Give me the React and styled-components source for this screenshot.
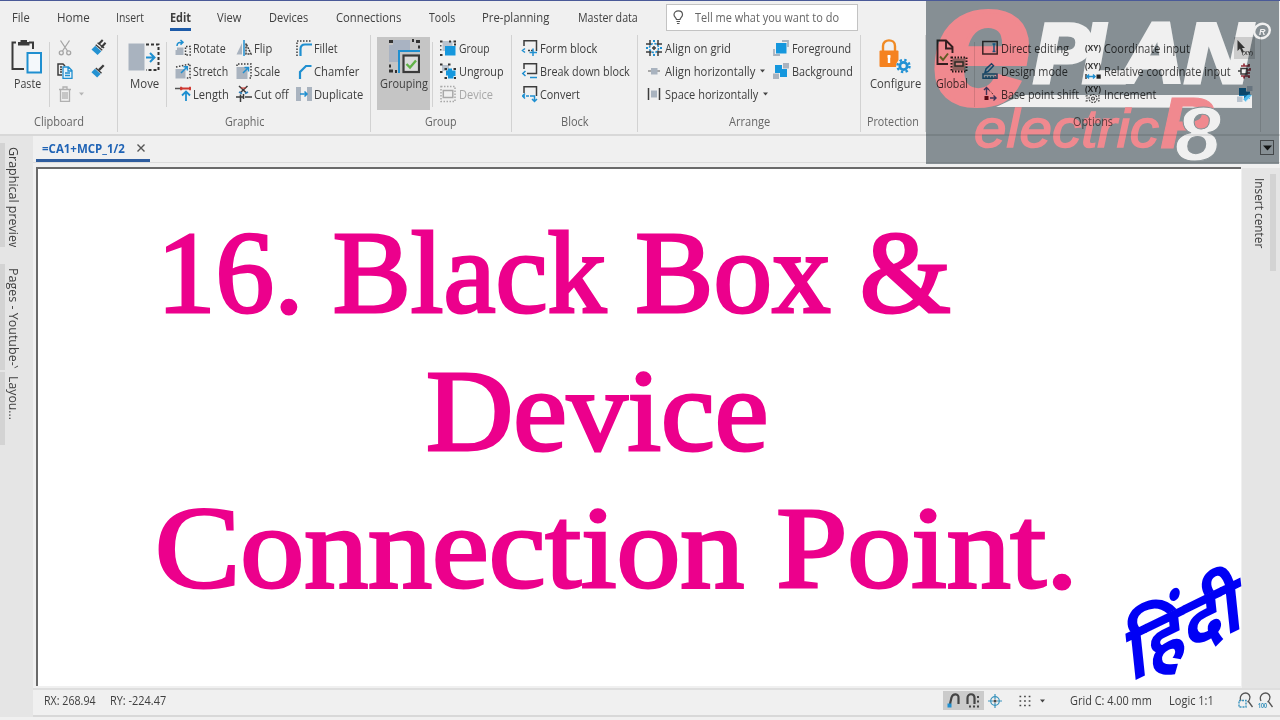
import React, {useLayoutEffect, useRef, useState} from "react";
import styled, {createGlobalStyle, css} from "styled-components";

const GlobalStyle = createGlobalStyle`
  * {
    box-sizing: border-box;
  }
  body {
    margin: 0;
    overflow: hidden;
    background: #f0f0f0;
    font-family: "Open Sans", "Noto Sans", sans-serif;
    font-size: 13px;
    color: #3f3f3f;
  }
`;

// Squeezes a text so that it takes exactly the given length.
function Fit({w, vertical, children}) {
  const ref = useRef();
  const [scale, setScale] = useState(1);

  useLayoutEffect(() => {
    const size = vertical ? ref.current.offsetHeight : ref.current.offsetWidth;
    setScale(w / size);
  }, [w, vertical]);

  return (
    <FitBox $w={w} $vertical={vertical}>
      <FitText
        ref={ref}
        $vertical={vertical}
        style={{transform: vertical ? `scaleY(${scale})` : `scaleX(${scale})`}}
      >
        {children}
      </FitText>
    </FitBox>
  );
}

const ink = {fill: "none", stroke: "#3c3c3c", strokeWidth: 1.5};
const blue = {fill: "none", stroke: "#1f8fd0", strokeWidth: 1.5};
const grey = "#a9b3bf";

const icons = {
  cut: (
    <g fill="none" stroke="#a5a5a5" strokeWidth="1.3">
      <path d="M3.500 0.500 L10.500 11 M12.500 0.500 L5.500 11" />
      <circle cx="4.3" cy="12.8" r="2" />
      <circle cx="11.7" cy="12.8" r="2" />
    </g>
  ),
  copy: (
    <>
      <path d="M5 12 H1 V1 H6 L8 3 M3 4 H5 M3 6.500 H5 M3 9 H5" {...ink} />
      <path d="M6 4 H11.500 L15 7.500 V15.300 H6 Z M11 4 V8 H15 M8 10 H13 M8 12.500 H13" fill="#e8f3fa" stroke="#1f8fd0" strokeWidth="1.3" />
    </>
  ),
  trash: (
    <path d="M2 3.500 H14 M6 3 V1 H10 V3 M3.500 4 V15.300 H12.500 V4 M6 6 V13 M8 6 V13 M10 6 V13" fill="none" stroke="#b0b0b0" strokeWidth="1.3" />
  ),
  brush: (
    <>
      <path d="M14.500 1.500 L9 7" stroke="#3c3c3c" strokeWidth="2.600" />
      <path d="M5.500 4.500 L12 10.500" stroke="#3c3c3c" strokeWidth="1.600" />
      <path d="M4.500 5.500 L11 11.500 L7 15.500 L0.500 9.500 Z" fill="#2492d2" />
    </>
  ),
  brushes: (
    <>
      <path d="M12.500 0 L8 4.500 M15.500 3 L11 8" stroke="#3c3c3c" strokeWidth="2.200" />
      <path d="M5 5 L12 11 M7 3 L14 8.500" stroke="#3c3c3c" strokeWidth="1.500" />
      <path d="M4.500 6 L11 12 L7 16 L0.500 10 Z" fill="#2492d2" />
    </>
  ),
  rotate: (
    <>
      <path d="M0.500 15 V10 H2 V7.500 H8.500 V15 Z" fill={grey} />
      <path d="M2 6 C2 3 4 2.200 7 2.200 M5.500 0 L8 2.200 L5.500 4.600" {...blue} />
      <path d="M10.500 15 V6.500 H15.200 V15 Z" {...ink} strokeDasharray="1.500 1.500" />
    </>
  ),
  flip: (
    <>
      <path d="M6 3 V14.500 H0.500 Z" fill={grey} />
      <path d="M8 0 V16" {...blue} />
      <path d="M10 3.500 V14 H15 Z" {...ink} strokeDasharray="2 1" />
    </>
  ),
  fillet: (
    <>
      <path d="M1 16 V1 H16" {...ink} strokeDasharray="1.500 1.500" />
      <path d="M4.500 16 V9 C4.500 6 6 4.500 9 4.500 H16" {...blue} strokeWidth="2.200" />
    </>
  ),
  stretch: (
    <>
      <rect x="0.500" y="6" width="10" height="9.500" fill={grey} />
      <path d="M1 4 L15 1 V15 H11" {...ink} strokeDasharray="1.500 1.500" />
      <path d="M6 10 L12 4 M8.500 3.700 H12.300 V7.500" {...blue} />
    </>
  ),
  scale: (
    <>
      <rect x="0.500" y="4" width="11" height="12" fill={grey} />
      <path d="M1 3 V1 H15 V15 H12" {...ink} strokeDasharray="1.500 1.500" />
      <path d="M7 10 L12 5 M8.500 4.500 H12.500 V8.500" {...blue} />
    </>
  ),
  chamfer: <path d="M4 16 V9 L10 3 H15.500" {...blue} strokeWidth="2.200" />,
  length: (
    <>
      <path d="M0 2.500 H8" stroke="#555" strokeWidth="1.500" />
      <path d="M6 2.500 H16 M6 0.800 V4.200 M15 0.800 V4.200" stroke="#d0362f" strokeWidth="1.800" />
      <path d="M11 15 V6 M7 9.500 L11 5.500 L15 9.500" {...blue} strokeWidth="1.800" />
    </>
  ),
  cutoff: (
    <>
      <path d="M0 11 H7 M9 11 H16 M4.500 8.500 V16 M7.500 8 V13" {...ink} />
      <path d="M3 0 L10.500 7 M11.500 0 L4 7" {...ink} />
      <path d="M3 6 L6 7.500 M12 6 L9 7.500" stroke="#2f7fb8" strokeWidth="1.800" />
      <path d="M5 2 L10 2" stroke="#d0362f" strokeWidth="1" />
    </>
  ),
  duplicate: (
    <>
      <path d="M0 1 H5 V15 H0 Z M11 1 H16 V15 H11 Z" fill={grey} />
      <path d="M4 8 H11 M8.500 5.500 L11 8 L8.500 10.500" {...blue} />
    </>
  ),
  group: (
    <>
      <rect x="2.500" y="1" width="10" height="10" fill="#b9c3ce" />
      <rect x="5" y="6" width="10.500" height="9.500" fill="#1597dd" />
      <path d="M0 1.500 H2.500 M9 1.500 H11 M13.500 1.500 H16 M0 15 H2.500 M14 4.500 H16" stroke="#333" strokeWidth="2" />
      <path d="M0.800 5 V13" stroke="#333" strokeWidth="1.300" strokeDasharray="1.500 2.500" />
    </>
  ),
  ungroup: (
    <>
      <path d="M2 2 H9 V8 H2 Z" fill="#b9c3ce" />
      <path d="M6 7.500 H8 V5.500 H12 V7.500 H15.500 V13 H13.500 V15.500 H8 V12.500 H6 Z" fill="#1597dd" />
      <path d="M0 1.500 H2.500 M8 1.500 H10.500 M0 9 H2.500 M4.500 6 H7 M13.500 6 H16 M4.500 15 H7 M14 15 H16" stroke="#333" strokeWidth="2" />
    </>
  ),
  device: (
    <g fill="none" stroke="#a9a9a9" strokeWidth="1.500">
      <rect x="1" y="0.500" width="14" height="15" strokeDasharray="1.500 1.500" />
      <rect x="3.300" y="4.500" width="9.500" height="7" />
    </g>
  ),
  formblock: (
    <>
      <path d="M2 6 V0.800 H14.500 V11" {...ink} />
      <path d="M6 10.500 H12" {...ink} strokeDasharray="2 1" />
      <path d="M3 8.500 L0.500 10.500 L3 12.500 M7.500 12.500 H15 M11 8.500 V16" {...blue} />
    </>
  ),
  breakblock: (
    <>
      <path d="M2 6 V0.800 H14.500 V10.500 H5" {...ink} />
      <path d="M3.500 8 L0.800 10.500 L3.500 13 M8 14.500 H15" {...blue} />
    </>
  ),
  convert: (
    <>
      <path d="M2 7 V0.800 H14.500 V10" {...ink} />
      <path d="M0 10 H10 M3 7.500 L0.500 10 L3 12.500" {...blue} strokeDasharray="3 1" />
      <path d="M10 10 H12.500 V15 M10 13 L12.500 15.500 L15 13" {...blue} />
    </>
  ),
  grid: (
    <>
      <path d="M4 0 V16 M12 0 V16 M0 4 H16 M0 12 H16" {...ink} strokeDasharray="5.500 5" />
      <path d="M8 0 V2 M8 14 V16 M0 8 H2 M14 8 H16" {...blue} strokeWidth="2" />
      <circle cx="8" cy="8" r="4.500" {...blue} strokeDasharray="2 1.500" />
      <path d="M8 6 V10 M6 8 H10" {...ink} />
    </>
  ),
  alignh: (
    <>
      <path d="M2 8 H14" stroke="#777" strokeWidth="1.200" />
      <rect x="5" y="5" width="6.500" height="6.500" fill={grey} />
    </>
  ),
  spaceh: (
    <>
      <path d="M2.500 2 V14 M13.500 2 V14" {...ink} />
      <rect x="5" y="4.500" width="6" height="7" fill={grey} />
    </>
  ),
  foreground: (
    <>
      <path d="M9 1 H15 V7 M1 9 V15 H7" fill="none" stroke={grey} strokeWidth="1.800" />
      <rect x="3" y="3" width="10.500" height="10.500" fill="#1597dd" />
    </>
  ),
  background: (
    <>
      <path d="M2 2 H9 V6 H14 V14 H7 V10 H2 Z" fill="#1597dd" />
      <path d="M10 0 H16 V5.500 H10 Z M0 10.500 H6 V16 H0 Z" fill={grey} />
    </>
  ),
  direct: (
    <>
      <rect x="0.800" y="1.500" width="14.400" height="12.500" {...ink} />
      <path d="M10.500 4 H13.500 M12 4 V11.500 M10.500 11.500 H13.500" {...blue} />
    </>
  ),
  design: (
    <>
      <path d="M1 11 H15 V15.200 H1 Z M4 13 V15 M7 13 V15 M10 13 V15 M13 13 V15" fill="none" stroke="#256f9b" strokeWidth="1.500" />
      <path d="M3 9.500 L4 6 L9.500 0.800 L11.500 2.800 L6 8.500 Z" fill="none" stroke="#2474a8" strokeWidth="1.500" />
    </>
  ),
  base: (
    <>
      <path d="M4.500 9 V2 M2 4 L4.500 1.500 L7 4 M8 12 H14 M11.500 9.500 L14 12 L11.500 14.500" fill="none" stroke="#3c5c94" strokeWidth="1.400" />
      <rect x="2.500" y="10" width="4" height="4" fill="#5a1020" />
      <path d="M7 4.500 C9 5.500 10.500 7 11 9" {...ink} strokeWidth="1" strokeDasharray="1 1" />
    </>
  ),
  pointer: (
    <>
      <rect width="21" height="22" x="-3" y="-3" fill="#000" opacity="0.15" />
      <path d="M0.500 0 V11 L3 8.500 L5 13 L7 12 L5 8 H8 Z" fill="#333" />
      <text x="5" y="15" fontSize="6" fontWeight="bold" fill="#444" textLength="11" lengthAdjust="spacingAndGlyphs">(XY)</text>
    </>
  ),
  contact: (
    <>
      <path d="M4 5.500 H10 V11 H4 Z M1 8 H4" {...ink} />
      <path d="M4 3 H7 V0.500 M7 3 H12 V1 M10 7 H13 V5 M4 13 H12 V15 M7 13 V15.500 M10 10 H13" fill="none" stroke="#94303c" strokeWidth="1.700" />
    </>
  ),
  layers: (
    <>
      <path d="M2 2 H9 V5.500 H13 V13 H7 V10 H2 Z" fill="#1277ae" />
      <path d="M10 0 H15.500 V5 H10 Z M0 10.500 H5.500 V16 H0 Z" fill="#b9c3ce" />
      <path d="M7.500 14.500 L13.500 8.500" stroke="#4fbdf0" strokeWidth="3.500" />
      <path d="M9.500 15 L14.500 10" stroke="#e4f2fa" strokeWidth="1" />
    </>
  ),
};

function Icon({name, size = 16}) {
  return (
    <svg width={size} height={size} viewBox="0 0 16 16" overflow="visible">
      {icons[name]}
    </svg>
  );
}

// The "(XY)" family of icons shares its lettering.
function CoordIcon({kind}) {
  return (
    <svg width="16" height="16" viewBox="0 0 16 16" overflow="visible">
      <text x="0" y={kind === "plain" ? 11 : 6} fontSize="8.500" fontWeight="bold" fill="#333" textLength="16" lengthAdjust="spacingAndGlyphs">
        (XY)
      </text>
      {kind === "relative" && (
        <>
          <path d="M1 11 V16" {...ink} />
          <path d="M1 13.500 H10 M4 11.500 L2 13.500 L4 15.500 M8 11.500 L10 13.500 L8 15.500" {...blue} />
          <rect x="11.500" y="11.500" width="4.200" height="4.200" fill="#222" />
        </>
      )}
      {kind === "increment" && (
        <g fill="none" stroke="#444" strokeWidth="1.100">
          <path d="M2 9 V16 M14 9 V16 M0.500 10 H3 M13 10 H15.500 M0.500 15 H3 M13 15 H15.500" strokeDasharray="1.500 1" />
          <circle cx="8" cy="12.500" r="4" strokeDasharray="2 1" />
          <circle cx="8" cy="12.500" r="1.500" />
        </g>
      )}
    </svg>
  );
}

const PasteIcon = () => (
  <svg width="34" height="36" viewBox="1 0 34 36">
    <path d="M7 4.500 H3.500 V31 H15 M20 4.500 H24 V11" fill="none" stroke="#3a3a3a" strokeWidth="2" />
    <path d="M9 7.500 V4 H11.500 V2 H18 V4 H20.500 V7.500 Z" fill="#3a3a3a" />
    <rect x="18.500" y="15" width="13.500" height="19.500" fill="#f4f8fb" stroke="#1f8fd0" strokeWidth="2" />
  </svg>
);

const MoveIcon = () => (
  <svg width="32" height="36" viewBox="0 0 32 36">
    <rect x="0.500" y="5.500" width="16" height="27" fill="#a9b3bf" />
    <path d="M18 6.500 H30.500 V32 H18" fill="none" stroke="#333" strokeWidth="2" strokeDasharray="3 2" />
    <path d="M18 19.500 H26 M22 15 L26.500 19.500 L22 24" fill="none" stroke="#1f8fd0" strokeWidth="2" />
  </svg>
);

const GroupingIcon = () => (
  <svg width="32" height="36" viewBox="0 0 32 36">
    <path d="M5 2 H22 V12 H10 V24 H1 V7 H5 Z" fill="#a9b3c2" />
    <path d="M11 35 V13 H32" fill="none" stroke="#1f8fd0" strokeWidth="2" />
    <rect x="15.500" y="17.500" width="15.500" height="16.500" fill="#dcdcdc" stroke="#3a3a3a" strokeWidth="2.200" />
    <path d="M18.500 26 L22 29.500 L28 22.500" fill="none" stroke="#60b246" strokeWidth="2.400" />
    <path d="M1 3.500 H5 M24 2.500 H26 M28 3.500 H32 M1 33 H5 M7 33.500 H9 M30 9 H32 M1 28 H3" stroke="#333" strokeWidth="3" />
  </svg>
);

const LockIcon = () => (
  <svg width="32" height="36" viewBox="0 0 32 36">
    <path d="M4 13 V8 C4 0.500 16 0.500 16 8 V13" fill="none" stroke="#f08a24" strokeWidth="2.400" />
    <rect x="0.500" y="12.500" width="19" height="16.500" rx="1" fill="#f58220" />
    <path d="M10 17 V25 M8.500 18.500 H11.500" stroke="#fff" strokeWidth="2.400" />
    <circle cx="24.500" cy="28" r="7.500" fill="#f0f0f0" />
    <circle cx="24.500" cy="28" r="3.700" fill="none" stroke="#2191d4" strokeWidth="2.800" />
    <circle cx="24.500" cy="28" r="6" fill="none" stroke="#2191d4" strokeWidth="2.400" strokeDasharray="2.360 2.360" />
  </svg>
);

const GlobalIcon = () => (
  <svg width="32" height="36" viewBox="1 0 32 36">
    <path d="M13 26 H2.500 V2.500 H11 L17.500 9 V15 M11 3 V10.500 H17" fill="none" stroke="#333" strokeWidth="1.900" />
    <path d="M5 18.500 L8 22 L13 15.500" fill="none" stroke="#62a03b" strokeWidth="2" />
    <rect x="17.500" y="20.500" width="13" height="12" fill="#8fa79b" />
    <rect x="16.500" y="19.500" width="15" height="14" fill="none" stroke="#222" strokeWidth="2" strokeDasharray="1.500 1.500" />
    <rect x="20" y="24" width="8" height="4" fill="#cfe0d5" stroke="#2b4a3c" strokeWidth="1.500" />
  </svg>
);

const BulbIcon = () => (
  <svg width="11" height="15" viewBox="0 0 11 15" fill="none" stroke="#555" strokeWidth="1.200">
    <path d="M3.500 9.500 C3 7.500 1 7 1 4.700 C1 -0.300 9.500 -0.300 9.500 4.700 C9.500 7 7.500 7.500 7 9.500 Z M3.500 11.500 H7 M4 13.500 H6.500" />
  </svg>
);

const MagnetIcon = ({dots}) => (
  <svg width="17" height="17" viewBox="0 0 17 17">
    <path d={dots ? "M2.500 12 V6 C2.500 1 9.500 1 9.500 6 V12" : "M5 12 L6.500 5.500 C8 1 14 1.500 13.500 6 V12"} fill="none" stroke="#444" strokeWidth="2.200" />
    {dots ? (
      <path d="M12 5 H15 M12 9.500 H15 M4 14.500 H16" stroke="#444" strokeWidth="2" strokeDasharray="2 2" />
    ) : (
      <rect x="2.500" y="11.500" width="4" height="4" fill="#1f8fd0" />
    )}
  </svg>
);

const TargetIcon = () => (
  <svg width="14" height="14" viewBox="0 0 14 14" fill="none" stroke="#3a93bd" strokeWidth="1.200">
    <circle cx="7" cy="7" r="4.300" />
    <path d="M7 0 V5 M7 9 V14 M0 7 H5 M9 7 H14" />
    <circle cx="7" cy="7" r="1" fill="#444" stroke="#444" />
  </svg>
);

const DotsIcon = () => (
  <svg width="12" height="12" viewBox="0 0 12 12">
    <path d="M0.500 1.500 H12 M0.500 6 H12 M0.500 10.500 H12" stroke="#444" strokeWidth="1.600" strokeDasharray="1.700 2.900" />
  </svg>
);

const LensIcon = ({full}) => (
  <svg width="16" height="17" viewBox="0 0 16 17" fill="none">
    <path d="M3 9 C-0.500 1.500 10.500 -2.500 12 5 C12 7 11 9 9.500 10 M10.500 9.500 L14.500 15" stroke="#555" strokeWidth="1.300" />
    {full ? (
      <text x="0" y="15.500" fontSize="7" fontWeight="bold" fill="#3a93bd" textLength="9" lengthAdjust="spacingAndGlyphs">100</text>
    ) : (
      <rect x="1" y="8.500" width="7" height="6.500" stroke="#3a93bd" strokeWidth="1.400" strokeDasharray="2 1" />
    )}
  </svg>
);

const Arrow = ({faded}) => (
  <svg width="5" height="4" viewBox="0 0 5 4">
    <path d="M0 0.500 H5 L2.500 3.500 Z" fill={faded ? "#b5b5b5" : "#444"} />
  </svg>
);

function Tools({items, gap}) {
  return (
    <ToolColumn>
      {items.map(([icon, text, w, extra]) => (
        <Tool key={text} $gap={gap} $disabled={extra === "disabled"}>
          {typeof icon === "string" ? <Icon name={icon} /> : icon}
          <Fit w={w}>{text}</Fit>
          {extra === "menu" && <Arrow />}
        </Tool>
      ))}
    </ToolColumn>
  );
}

function BigTool({icon, text, w, textWidth, active}) {
  return (
    <BigButton $w={w} $active={active}>
      {icon}
      <Fit w={textWidth}>{text}</Fit>
    </BigButton>
  );
}

function Group({title, titleWidth, width, pad = 0, children}) {
  return (
    <GroupBox $w={width}>
      <GroupBody $pad={pad}>{children}</GroupBody>
      <GroupTitle>
        <Fit w={titleWidth}>{title}</Fit>
      </GroupTitle>
    </GroupBox>
  );
}

const menu = [
  ["File", 18, 12],
  ["Home", 33, 27],
  ["Insert", 28, 26],
  ["Edit", 21, 26],
  ["View", 24, 26],
  ["Devices", 39, 28],
  ["Connections", 65, 28],
  ["Tools", 26, 28],
  ["Pre-planning", 67, 27],
  ["Master data", 60, 29],
];

// Letters of the brand name: [letter, left edge, width].
const brand = [
  ["P", 108, 56],
  ["L", 157, 47],
  ["A", 196, 62],
  ["N", 259, 66],
];

function Logo() {
  const font = {fontFamily: "Liberation Sans", fontStyle: "italic"};
  return (
    <LogoOverlay>
      <svg width="353" height="164" viewBox="0 0 353 164">
        <path d="M70 107 L96 95 H326 V108 Z" fill="#fff" />
        <g {...font} fill="#ff9298" stroke="#ff9298">
          <text x="5" y="104" fontSize="172" fontWeight="bold" strokeWidth="4" textLength="101" lengthAdjust="spacingAndGlyphs">e</text>
          <text x="48" y="147" fontSize="54" strokeWidth="1.500" textLength="185" lengthAdjust="spacingAndGlyphs">electric</text>
          <text x="234" y="148" fontSize="72" fontWeight="bold" strokeWidth="1" textLength="54" lengthAdjust="spacingAndGlyphs">P</text>
        </g>
        <g {...font} fill="#fff" stroke="#fff" fontWeight="bold">
          {brand.map(([letter, x, w]) => (
            <text key={letter} x={x} y="82" fontSize="83" strokeWidth="5" textLength={w} lengthAdjust="spacingAndGlyphs">
              {letter}
            </text>
          ))}
          <text x="249" y="160" fontSize="76" stroke="#8e989d" strokeWidth="1" textLength="46" lengthAdjust="spacingAndGlyphs">8</text>
        </g>
        <ellipse cx="336" cy="31" rx="8" ry="7" fill="none" stroke="#fff" strokeWidth="2.400" transform="rotate(-25 336 31)" />
        <text x="333" y="34.500" {...font} fontSize="9" fontWeight="bold" fill="#fff">R</text>
      </svg>
    </LogoOverlay>
  );
}

export default function App() {
  return (
    <>
      <GlobalStyle />
      <Window>
        <MenuBar>
          {menu.map(([text, w, gap]) => (
            <MenuItem key={text} $gap={gap} $active={text === "Edit"}>
              <Fit w={w}>{text}</Fit>
            </MenuItem>
          ))}
          <Search>
            <BulbIcon />
            <Fit w={144}>Tell me what you want to do</Fit>
          </Search>
        </MenuBar>

        <Ribbon>
          <Group title="Clipboard" titleWidth={50} width={118} pad={5}>
            <BigTool icon={<PasteIcon />} text="Paste" w={44} textWidth={27} />
            <Divider />
            <IconGrid>
              <Icon name="cut" />
              <Icon name="brushes" size={15} />
              <Icon name="copy" />
              <Icon name="brush" size={14} />
              <Icon name="trash" />
              <TrashArrow>
                <Arrow faded />
              </TrashArrow>
            </IconGrid>
          </Group>
          <Group title="Graphic" titleWidth={39} width={253} pad={4}>
            <BigTool icon={<MoveIcon />} text="Move" w={44} textWidth={29} />
            <Divider />
            <ColumnSet $left={8} $columns="61px 60px 70px">
              <Tools gap={2} items={[["rotate", "Rotate", 33], ["stretch", "Stretch", 35], ["length", "Length", 36]]} />
              <Tools gap={2} items={[["flip", "Flip", 18], ["scale", "Scale", 26], ["cutoff", "Cut off", 35]]} />
              <Tools gap={2} items={[["fillet", "Fillet", 24], ["chamfer", "Chamfer", 45], ["duplicate", "Duplicate", 49]]} />
            </ColumnSet>
          </Group>
          <Group title="Group" titleWidth={32} width={141} pad={6}>
            <BigTool icon={<GroupingIcon />} text="Grouping" w={53} textWidth={48} active />
            <Divider $left={2} />
            <ColumnSet $left={7} $columns="70px">
              <Tools gap={3} items={[["group", "Group", 31], ["ungroup", "Ungroup", 45], ["device", "Device", 34, "disabled"]]} />
            </ColumnSet>
          </Group>
          <Group title="Block" titleWidth={28} width={126}>
            <ColumnSet $left={10} $columns="110px">
              <Tools gap={2} items={[["formblock", "Form block", 57], ["breakblock", "Break down block", 90], ["convert", "Convert", 40]]} />
            </ColumnSet>
          </Group>
          <Group title="Arrange" titleWidth={41} width={223}>
            <ColumnSet $left={8} $columns="127px 80px">
              <Tools gap={3} items={[["grid", "Align on grid", 66], ["alignh", "Align horizontally", 90, "menu"], ["spaceh", "Space horizontally", 93, "menu"]]} />
              <Tools gap={3} items={[["foreground", "Foreground", 59], ["background", "Background", 61]]} />
            </ColumnSet>
          </Group>
          <Group title="Protection" titleWidth={52} width={65} pad={6}>
            <BigTool icon={<LockIcon />} text="Configure" w={56} textWidth={51} />
          </Group>
          <Group title="Options" titleWidth={40} width={335} pad={4}>
            <BigTool icon={<GlobalIcon />} text="Global" w={44} textWidth={32} />
            <Divider />
            <ColumnSet $left={7} $columns="103px 152px 16px">
              <Tools gap={3} items={[["direct", "Direct editing", 68], ["design", "Design mode", 67], ["base", "Base point shift", 78]]} />
              <Tools
                gap={3}
                items={[
                  [<CoordIcon kind="plain" />, "Coordinate input", 86],
                  [<CoordIcon kind="relative" />, "Relative coordinate input", 127],
                  [<CoordIcon kind="increment" />, "Increment", 52],
                ]}
              />
              <ToolColumn>
                <Tool><Icon name="pointer" /></Tool>
                <Tool><Icon name="contact" /></Tool>
                <Tool><Icon name="layers" /></Tool>
              </ToolColumn>
            </ColumnSet>
          </Group>
        </Ribbon>

        <Workspace>
          <LeftDock>
            <DockTab $h={104} $after={17}><DockText><Fit vertical w={105}>Graphical preview</Fit></DockText></DockTab>
            <DockTab $h={106} $after={2}><DockText><Fit vertical w={101}>Pages - Youtube-‵</Fit></DockText></DockTab>
            <DockTab $h={73}><DockText><Fit vertical w={44}>Layou...</Fit></DockText></DockTab>
          </LeftDock>
          <Main>
            <PageTabs>
              <PageTab>
                <Fit w={83}>=CA1+MCP_1/2</Fit>
                <svg width="8" height="8" viewBox="0 0 8 8">
                  <path d="M0.500 0.500 L7.500 7.500 M7.500 0.500 L0.500 7.500" stroke="#555" strokeWidth="1.400" />
                </svg>
              </PageTab>
              <TabsMenu><svg width="9" height="6" viewBox="0 0 9 6"><path d="M0 0.500 H9 L4.500 5.500 Z" fill="#222" /></svg></TabsMenu>
            </PageTabs>
            <Content>
              <Canvas>
                <Title>
                  <TitleLine $left={119}><Fit w={794}>16. Black Box &amp;</Fit></TitleLine>
                  <TitleLine $left={388}><Fit w={342}>Device</Fit></TitleLine>
                  <TitleLine $left={117}><Fit w={923}>Connection Point.</Fit></TitleLine>
                </Title>
                <Language>हिंदी</Language>
              </Canvas>
              <RightDock>
                <DockText><Fit vertical w={70}>Insert center</Fit></DockText>
                <DockHandle />
              </RightDock>
            </Content>
            <StatusBar>
              <Fit w={52}>RX: 268.94</Fit>
              <Fit w={56}>RY: -224.47</Fit>
              <StatusRight>
                <Snap><MagnetIcon /><MagnetIcon dots /></Snap>
                <TargetIcon />
                <GridMenu><DotsIcon /><Arrow /></GridMenu>
                <Fit w={82}>Grid C: 4.00 mm</Fit>
                <Fit w={45}>Logic 1:1</Fit>
                <Lenses><LensIcon /><LensIcon full /></Lenses>
              </StatusRight>
            </StatusBar>
          </Main>
        </Workspace>
        <Logo />
      </Window>
    </>
  );
}

const FitBox = styled.span`
  display: inline-block;
  flex: none;
  ${({$w, $vertical}) => ($vertical ? css`height: ${$w}px;` : css`width: ${$w}px;`)}
`;

const FitText = styled.span`
  display: inline-block;
  white-space: nowrap;
  transform-origin: 0 0;
  ${({$vertical}) => $vertical && css`writing-mode: vertical-rl;`}
`;

const Window = styled.div`
  position: relative;
  display: flex;
  flex-direction: column;
  width: 1280px;
  height: 720px;
  overflow: hidden;
  border-top: 1px solid #4a5a98;
  background: #f0f0f0;
`;

const MenuBar = styled.div`
  display: flex;
  height: 33px;
  padding-top: 3px;
`;

const MenuItem = styled.div`
  height: 27px;
  margin-left: ${({$gap}) => $gap}px;
  line-height: 26px;
  border-bottom: 3px solid ${({$active}) => ($active ? "#1c5aa8" : "transparent")};
  font-weight: ${({$active}) => ($active ? 700 : 400)};
`;

const Search = styled.div`
  display: flex;
  align-items: center;
  gap: 11px;
  width: 192px;
  height: 27px;
  margin-left: 28px;
  padding: 0 0 1px 6px;
  background: #fff;
  border: 1px solid #c3c3c3;
  color: #666;
`;

const Ribbon = styled.div`
  display: flex;
  height: 102px;
  padding-top: 1px;
  border-bottom: 2px solid #d8d8d8;
`;

const GroupBox = styled.section`
  display: flex;
  flex: none;
  flex-direction: column;
  width: ${({$w}) => $w}px;
  height: 97px;
  border-right: 1px solid #d2d2d2;
`;

const GroupBody = styled.div`
  display: flex;
  height: 76px;
  padding: 1px 0 0 ${({$pad}) => $pad}px;
`;

const GroupTitle = styled.div`
  display: flex;
  justify-content: center;
  line-height: 20px;
  color: #666;
`;

const BigButton = styled.div`
  display: flex;
  flex: none;
  flex-direction: column;
  align-items: center;
  width: ${({$w}) => $w}px;
  height: 73px;
  margin-top: 1px;
  padding-top: 1px;
  line-height: 19px;
  background: ${({$active}) => ($active ? "#c5c5c5" : "transparent")};
`;

const Divider = styled.div`
  flex: none;
  width: 1px;
  height: 65px;
  margin: 6px 0 0 ${({$left = 0}) => $left}px;
  background: #d2d2d2;
`;

const IconGrid = styled.div`
  display: grid;
  grid-template-columns: 34px 20px;
  grid-auto-rows: 23px;
  align-items: center;
  margin-left: 7px;
`;

const TrashArrow = styled.div`
  display: flex;
  margin-left: -12px;
`;

const ColumnSet = styled.div`
  display: grid;
  grid-template-columns: ${({$columns}) => $columns};
  margin-left: ${({$left}) => $left}px;
`;

const ToolColumn = styled.div`
  display: flex;
  flex-direction: column;
`;

const Tool = styled.div`
  display: flex;
  align-items: center;
  gap: ${({$gap = 0}) => $gap}px;
  height: 23px;
  white-space: nowrap;
  color: ${({$disabled}) => ($disabled ? "#a8a8a8" : "#3f3f3f")};
  svg {
    flex: none;
  }
  span + svg {
    margin-left: 2px;
  }
`;

const Workspace = styled.div`
  display: flex;
  flex: 1;
  min-height: 0;
`;

const LeftDock = styled.aside`
  flex: none;
  width: 33px;
  height: 581px;
  padding-top: 7px;
  background: #e5e5e5;
`;

const DockTab = styled.div`
  height: ${({$h}) => $h}px;
  margin-bottom: ${({$after = 0}) => $after}px;
  padding: 4px 0 0 1px;
  border-left: 5px solid #d3d3d3;
  overflow: hidden;
`;

const DockText = styled.div`
  width: 16px;
  font-size: 12px;
  line-height: 15px;
`;

const Main = styled.main`
  display: flex;
  flex: 1;
  flex-direction: column;
  min-width: 0;
`;

const PageTabs = styled.div`
  display: flex;
  justify-content: space-between;
  height: 27px;
  padding-left: 3px;
  border-bottom: 1px solid #dcdcdc;
`;

const PageTab = styled.div`
  display: flex;
  align-items: center;
  gap: 12px;
  width: 114px;
  height: 26px;
  padding: 1px 0 0 6px;
  border-bottom: 3px solid #2e5d9f;
  color: #1f63b5;
  font-weight: 700;
`;

const TabsMenu = styled.div`
  display: flex;
  align-items: center;
  justify-content: center;
  width: 14px;
  height: 15px;
  margin: 4px 6px 0 0;
  border: 1px solid #777;
`;

const Content = styled.div`
  display: flex;
  height: 525px;
  padding: 4px 0 2px 3px;
`;

const Canvas = styled.div`
  position: relative;
  flex: none;
  width: 1205px;
  background: #fff;
  border-top: 2px solid #6a6a6a;
  border-left: 2px solid #6a6a6a;
`;

const Title = styled.h1`
  margin: 0;
  padding-top: 35px;
  font-family: "Liberation Serif", serif;
  font-size: 117px;
  font-weight: 400;
  line-height: 137.500px;
  color: #ec008c;
  -webkit-text-stroke: 3px #ec008c;
`;

const TitleLine = styled.div`
  height: 137.500px;
  padding-left: ${({$left}) => $left}px;
`;

// Slanted sticker lying over the corner of the drawing page.
const Language = styled.div`
  position: absolute;
  right: -7px;
  bottom: 1px;
  font-family: "Noto Sans", sans-serif;
  font-size: 74px;
  font-weight: 700;
  line-height: 120px;
  color: #0000f5;
  transform: rotate(-26deg) skewX(-20deg);
`;

const RightDock = styled.aside`
  display: flex;
  flex: 1;
  justify-content: space-between;
  margin: 1px 0 -2px 1px;
  padding: 10px 4px 0 10px;
  background: #e5e5e5;
`;

const DockHandle = styled.div`
  width: 6px;
  height: 97px;
  margin-top: -4px;
  background: #d3d3d3;
`;

const StatusBar = styled.footer`
  display: flex;
  align-items: center;
  gap: 14px;
  height: 29px;
  padding: 0 0 4px 11px;
  border-top: 2px solid #dedede;
  border-bottom: 2px solid #d8d8d8;
  font-size: 12.500px;
`;

const StatusRight = styled.div`
  display: flex;
  align-items: center;
  height: 20px;
  margin-left: auto;
  gap: 17px;
  padding-right: 6px;
`;

const Snap = styled.div`
  display: flex;
  gap: 3px;
  align-items: center;
  height: 19px;
  margin-right: -13px;
  padding: 0 2px;
  background: #cbcbcb;
`;

const GridMenu = styled.div`
  display: flex;
  align-items: center;
  gap: 9px;
  margin-right: 8px;
`;

const Lenses = styled.div`
  display: flex;
  gap: 4px;
  margin-left: 7px;
`;

// Brand plate printed over the ribbon, which stays readable through it.
const LogoOverlay = styled.div`
  position: absolute;
  top: -1px;
  left: 926px;
  width: 353px;
  height: 164px;
  background: #8e989d;
  mix-blend-mode: multiply;
`;
